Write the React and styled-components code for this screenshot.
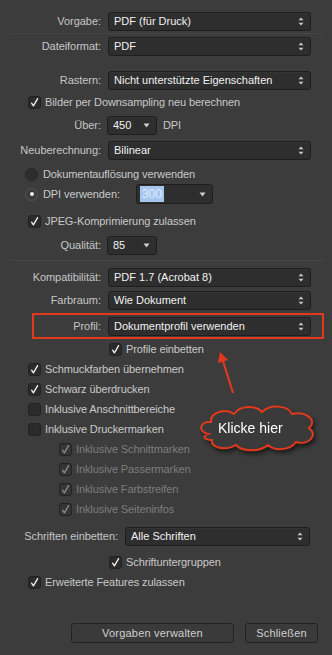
import React from 'react';
import styled, { createGlobalStyle } from 'styled-components';

const Global = createGlobalStyle`
  html, body { margin: 0; padding: 0; background: #3c3c3c; }
  body { font-family: "Liberation Sans", Arial, sans-serif; }
`;

const Page = styled.div`
  position: relative;
  width: 332px;
  height: 655px;
  padding-top: 11px;
  box-sizing: border-box;
  background: #3c3c3c;
  overflow: hidden;
  display: flex;
  flex-direction: column;
`;

const Row = styled.div`
  display: flex;
  align-items: center;
  height: ${p => p.$h || 20}px;
  margin-top: ${p => p.$mt || 0}px;
  padding-left: ${p => p.$pl || 0}px;
  gap: ${p => p.$gap ?? 7}px;
  flex-shrink: 0;
`;

const Label = styled.span`
  width: ${p => p.$w || 101}px;
  text-align: right;
  font-size: 11px;
  letter-spacing: -0.05px;
  color: #c6c6c6;
  white-space: nowrap;
`;

const Text = styled.span`
  font-size: 11px;
  letter-spacing: -0.1px;
  color: ${p => (p.$dim ? '#7c7c7c' : '#c9c9c9')};
  white-space: nowrap;
`;

const Separator = styled.div`
  height: 1px;
  margin: ${p => p.$mt || 0}px 8px 0 10px;
  background: #464646;
  flex-shrink: 0;
`;

const Popup = styled.div`
  width: ${p => p.$w || 203}px;
  height: 19px;
  box-sizing: border-box;
  display: flex;
  align-items: center;
  justify-content: space-between;
  padding: 0 6px 0 5px;
  background: #2e2e2e;
  border: 1px solid #1e1e1e;
  border-radius: 3px;
  box-shadow: inset 0 1px 0 rgba(255, 255, 255, 0.03);
  font-size: 11px;
  letter-spacing: 0;
  color: #f1f1f1;
  white-space: nowrap;
`;

const Field = styled.div`
  width: 77px;
  height: 20px;
  margin-left: 11px;
  box-sizing: border-box;
  display: flex;
  align-items: center;
  justify-content: space-between;
  padding: 0 6px 0 3px;
  background: #2e2e2e;
  border: 1px solid #1e1e1e;
  border-radius: 3px;
  font-size: 12px;
`;

const Selected = styled.span`
  background: #a7c7ee;
  color: #dfeaff;
  padding: 1px 2px;
`;

const Box = styled.span`
  width: 13px;
  height: 13px;
  box-sizing: border-box;
  border-radius: 3px;
  background: ${p => (p.$dim ? '#353535' : '#2b2b2b')};
  border: 1px solid #222;
  display: flex;
  align-items: center;
  justify-content: center;
  flex-shrink: 0;
`;

const Radio = styled.span`
  width: 13px;
  height: 13px;
  box-sizing: border-box;
  border-radius: 50%;
  background: ${p => (p.$on ? '#3a3a3a' : '#2e2e2e')};
  border: 1px solid ${p => (p.$on ? '#555' : '#262626')};
  display: flex;
  align-items: center;
  justify-content: center;
  flex-shrink: 0;
  &::after {
    content: '';
    display: ${p => (p.$on ? 'block' : 'none')};
    width: 4px;
    height: 4px;
    border-radius: 50%;
    background: #f0f0f0;
  }
`;

const Highlight = styled.div`
  margin: 3px 0 0 32px;
  width: 292px;
  height: 26px;
  box-sizing: border-box;
  border: 2px solid #e2391d;
  display: flex;
  align-items: center;
  flex-shrink: 0;
`;

const Buttons = styled.div`
  display: flex;
  gap: 11px;
  margin: 31px 0 0 71px;
  flex-shrink: 0;
`;

const Button = styled.button`
  width: ${p => p.$w}px;
  height: 20px;
  background: #3a3a3a;
  border: 1px solid #222;
  border-radius: 3px;
  font-family: "Liberation Sans", Arial, sans-serif;
  font-size: 11px;
  letter-spacing: 0.2px;
  color: #d0d0d0;
  padding: 0;
`;

const Cloud = styled.div`
  position: absolute;
  left: 196px;
  top: 402px;
  width: 124px;
  height: 50px;
  filter: drop-shadow(2px 3px 2px rgba(0, 0, 0, 0.55));
  svg { position: absolute; inset: 0; }
`;

const CloudText = styled.span`
  position: absolute;
  left: 22px;
  top: 18px;
  font-size: 14px;
  color: #fff;
  white-space: nowrap;
`;

const Arrow = styled.svg`
  position: absolute;
  left: 210px;
  top: 345px;
`;

function Arrows() {
  return (
    <svg width="6" height="9" viewBox="0 0 6 9">
      <path d="M0.5 3.2 L3 0.5 L5.5 3.2 Z" fill="#c8c8c8" />
      <path d="M0.5 5.8 L3 8.5 L5.5 5.8 Z" fill="#c8c8c8" />
    </svg>
  );
}

function Caret() {
  return (
    <svg width="7" height="5" viewBox="0 0 7 5">
      <path d="M0.5 0.5 L6.5 0.5 L3.5 4.5 Z" fill="#cfcfcf" />
    </svg>
  );
}

function Check({ dim }) {
  return (
    <svg width="11" height="11" viewBox="0 0 11 11">
      <path
        d="M2.6 6.2 L4.4 8.8 L8.6 1.6"
        fill="none"
        stroke={dim ? '#8c8c8c' : '#f4f4f4'}
        strokeWidth="1.3"
        strokeLinecap="round"
        strokeLinejoin="round"
      />
    </svg>
  );
}

function CheckRow({ pl = 28, mt, checked = true, dim, children }) {
  return (
    <Row $pl={pl} $mt={mt} $gap={4}>
      <Box $dim={dim}>{checked && <Check dim={dim} />}</Box>
      <Text $dim={dim}>{children}</Text>
    </Row>
  );
}

function Select({ label, value, mt, w, lw }) {
  return (
    <Row $mt={mt}>
      <Label $w={lw}>{label}</Label>
      <Popup $w={w}>
        <span>{value}</span>
        <Arrows />
      </Popup>
    </Row>
  );
}

export default function App() {
  return (
    <Page>
      <Global />
      <Select label="Vorgabe:" value="PDF (für Druck)" />
      <Separator $mt={2} />
      <Select label="Dateiformat:" value="PDF" mt={2} />
      <Select label="Rastern:" value="Nicht unterstützte Eigenschaften" mt={14} />
      <CheckRow mt={2}>Bilder per Downsampling neu berechnen</CheckRow>
      <Row $mt={3} $gap={6}>
        <Label $w={101}>Über:</Label>
        <Popup $w={50}>
          <span>450</span>
          <Caret />
        </Popup>
        <Text>DPI</Text>
      </Row>
      <Select label="Neuberechnung:" value="Bilinear" mt={5} />
      <Row $mt={4} $pl={25} $gap={5}>
        <Radio />
        <Text>Dokumentauflösung verwenden</Text>
      </Row>
      <Row $pl={25} $gap={5}>
        <Radio $on />
        <Text>DPI verwenden:</Text>
        <Field>
          <Selected>300</Selected>
          <Caret />
        </Field>
      </Row>
      <CheckRow mt={7}>JPEG-Komprimierung zulassen</CheckRow>
      <Row $mt={4} $gap={6}>
        <Label $w={101}>Qualität:</Label>
        <Popup $w={50}>
          <span>85</span>
          <Caret />
        </Popup>
      </Row>
      <Separator $mt={5} />
      <Select label="Kompatibilität:" value="PDF 1.7 (Acrobat 8)" mt={6} />
      <Select label="Farbraum:" value="Wie Dokument" mt={3} />
      <Highlight>
        <Row>
          <Label $w={67}>Profil:</Label>
          <Popup>
            <span>Dokumentprofil verwenden</span>
            <Arrows />
          </Popup>
        </Row>
      </Highlight>
      <CheckRow pl={109}>Profile einbetten</CheckRow>
      <CheckRow>Schmuckfarben übernehmen</CheckRow>
      <CheckRow>Schwarz überdrucken</CheckRow>
      <CheckRow checked={false}>Inklusive Anschnittbereiche</CheckRow>
      <CheckRow checked={false}>Inklusive Druckermarken</CheckRow>
      <CheckRow pl={59} dim>Inklusive Schnittmarken</CheckRow>
      <CheckRow pl={59} dim>Inklusive Passermarken</CheckRow>
      <CheckRow pl={59} dim>Inklusive Farbstreifen</CheckRow>
      <CheckRow pl={59} dim>Inklusive Seiteninfos</CheckRow>
      <Select label="Schriften einbetten:" value="Alle Schriften" mt={7} lw={118} w={185} />
      <CheckRow pl={109} mt={6}>Schriftuntergruppen</CheckRow>
      <CheckRow>Erweiterte Features zulassen</CheckRow>
      <Buttons>
        <Button $w={163}>Vorgaben verwalten</Button>
        <Button $w={73}>Schließen</Button>
      </Buttons>

      <Arrow width="30" height="52" viewBox="0 0 30 52">
        <line x1="23" y1="48" x2="13" y2="16" stroke="#e2391d" strokeWidth="2" />
        <polygon points="10,7 18,15 8,18" fill="#e2391d" />
      </Arrow>
      <Cloud>
        <svg width="124" height="50" viewBox="0 0 124 50">
          <path
            d="M12 32 C2 30 3 19 15 20 C14 10 30 6 38 12 C44 3 60 3 66 10 C74 2 92 3 96 12 C110 9 122 18 113 26 C123 33 112 44 100 40 C94 49 78 49 72 43 C64 50 46 50 40 43 C30 49 14 46 16 38 C8 38 6 34 12 32 Z"
            fill="#3a3a3a"
            stroke="#e2391d"
            strokeWidth="2"
          />
        </svg>
        <CloudText>Klicke hier</CloudText>
      </Cloud>
    </Page>
  );
}
